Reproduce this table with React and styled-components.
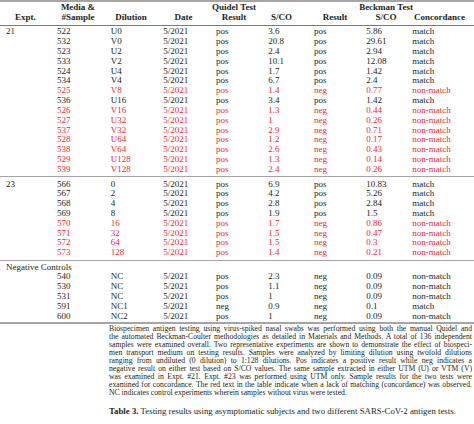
import React from 'react';
import styled, { createGlobalStyle, css } from 'styled-components';

const GlobalStyle = createGlobalStyle`
  html, body {
    margin: 0;
    padding: 0;
    background: #fff;
  }
  body {
    font-family: "Liberation Serif", "Times New Roman", serif;
    color: #231f20;
  }
`;

const COLS = '51px 54px 52px 53px 48px 47px 60px 42px 65px';
const PADS = [6, 6, 5.7, 6.3, 6, 10.3, 9, 1.3, 5.3];
const RED = '#ec2b31';

const padCells = PADS.map(
    (p, i) => css`
        & > *:nth-child(${i + 1}) {
            padding-left: ${p}px;
        }
    `
);

const Page = styled.div`
    width: 474px;
    height: 424px;
    overflow: hidden;
`;

const Table = styled.div`
    border-top: 2px solid #a5a5a5;
    border-bottom: 2px solid #a5a5a5;
`;

const Head = styled.div`
    display: grid;
    grid-template-columns: ${COLS};
    padding-bottom: 3px;
    border-bottom: 1px solid #7a7a7a;
    font-weight: bold;
    font-size: 9px;
    line-height: 10px;
`;

const HeadCell = styled.div`
    display: flex;
    flex-direction: column;
    justify-content: flex-end;
    align-items: center;
    height: 20px;
    white-space: nowrap;
`;

const Group = styled.div`
    padding: ${p => p.$top}px 0 ${p => p.$bottom}px;
    & + & {
        border-top: 1.5px solid #a5a5a5;
    }
`;

const Row = styled.div`
    display: grid;
    grid-template-columns: ${COLS};
    height: 9.84px;
    line-height: 9.84px;
    font-size: 9px;
    white-space: nowrap;
    color: ${p => (p.$red ? RED : '#231f20')};
    ${padCells}
`;

const GroupLabel = styled.div`
    height: 9.84px;
    line-height: 9.84px;
    font-size: 9px;
    padding-left: 6px;
`;

const Caption = styled.div`
    margin: 1px 2px 0 109px;
    font-size: 7.7px;
    line-height: 8px;
`;

const Line = styled.div`
    text-align: justify;
    text-align-last: ${p => (p.$last ? 'left' : 'justify')};
    word-spacing: ${p => p.$squeeze || 0}px;
`;

const Title = styled.div`
    margin-top: 9px;
    font-size: 8.8px;
    line-height: 10px;
    white-space: nowrap;
    b {
        font-weight: bold;
    }
`;

const headers = [
    ['', 'Expt.'],
    ['Media &', '#Sample'],
    ['', 'Dilution'],
    ['', 'Date'],
    ['Quidel Test', 'Result'],
    ['', 'S/CO'],
    ['', 'Result'],
    ['Beckman Test', 'S/CO'],
    ['', 'Concordance'],
];

// sample, dilution, quidel result, quidel s/co, beckman result, beckman s/co, concordance, red
const expt21 = [
    ['522', 'U0', 'pos', '3.6', 'pos', '5.86', 'match'],
    ['532', 'V0', 'pos', '20.8', 'pos', '29.61', 'match'],
    ['523', 'U2', 'pos', '2.4', 'pos', '2.94', 'match'],
    ['533', 'V2', 'pos', '10.1', 'pos', '12.08', 'match'],
    ['524', 'U4', 'pos', '1.7', 'pos', '1.42', 'match'],
    ['534', 'V4', 'pos', '6.7', 'pos', '2.4', 'match'],
    ['525', 'V8', 'pos', '1.4', 'neg', '0.77', 'non-match', true],
    ['536', 'U16', 'pos', '3.4', 'pos', '1.42', 'match'],
    ['526', 'V16', 'pos', '1.3', 'neg', '0.44', 'non-match', true],
    ['527', 'U32', 'pos', '1', 'neg', '0.26', 'non-match', true],
    ['537', 'V32', 'pos', '2.9', 'neg', '0.71', 'non-match', true],
    ['528', 'U64', 'pos', '1.2', 'neg', '0.17', 'non-match', true],
    ['538', 'V64', 'pos', '2.6', 'neg', '0.43', 'non-match', true],
    ['529', 'U128', 'pos', '1.3', 'neg', '0.14', 'non-match', true],
    ['539', 'V128', 'pos', '2.4', 'neg', '0.26', 'non-match', true],
];

const expt23 = [
    ['566', '0', 'pos', '6.9', 'pos', '10.83', 'match'],
    ['567', '2', 'pos', '4.2', 'pos', '5.26', 'match'],
    ['568', '4', 'pos', '2.8', 'pos', '2.84', 'match'],
    ['569', '8', 'pos', '1.9', 'pos', '1.5', 'match'],
    ['570', '16', 'pos', '1.7', 'neg', '0.86', 'non-match', true],
    ['571', '32', 'pos', '1.5', 'neg', '0.47', 'non-match', true],
    ['572', '64', 'pos', '1.5', 'neg', '0.3', 'non-match', true],
    ['573', '128', 'pos', '1.4', 'neg', '0.21', 'non-match', true],
];

const controls = [
    ['540', 'NC', 'pos', '2.3', 'neg', '0.09', 'non-match'],
    ['530', 'NC', 'pos', '1.1', 'neg', '0.09', 'non-match'],
    ['531', 'NC', 'pos', '1', 'neg', '0.09', 'non-match'],
    ['591', 'NC1', 'neg', '0.9', 'neg', '0.1', 'match'],
    ['600', 'NC2', 'pos', '1', 'neg', '0.09', 'non-match'],
];

const captionLines = [
    ['Biospecimen antigen testing using virus-spiked nasal swabs was performed using both the manual Quidel and'],
    ['the automated Beckman-Coulter methodologies as detailed in Materials and Methods. A total of 136 independent', -0.6],
    ['samples were examined overall. Two representative experiments are shown to demonstrate the effect of biospeci-', -0.8],
    ['men transport medium on testing results. Samples were analyzed by limiting dilution using twofold dilutions'],
    ['ranging from undiluted (0 dilution) to 1:128 dilutions. Pos indicates a positive result while neg indicates a'],
    ['negative result on either test based on S/CO values. The same sample extracted in either UTM (U) or VTM (V)', -0.4],
    ['was examined in Expt. #21. Expt. #23 was performed using UTM only. Sample results for the two tests were'],
    ['examined for concordance. The red text in the table indicate when a lack of matching (concordance) was observed.', -1],
    ['NC indicates control experiments wherein samples without virus were tested.'],
];

const DataRow = ({ expt, row }) => {
    const [sample, dilution, qRes, qSco, bRes, bSco, conc, red] = row;
    return (
        <Row $red={red}>
            <span>{expt}</span>
            <span>{sample}</span>
            <span>{dilution}</span>
            <span>5/2021</span>
            <span>{qRes}</span>
            <span>{qSco}</span>
            <span>{bRes}</span>
            <span>{bSco}</span>
            <span>{conc}</span>
        </Row>
    );
};

const App = () => {
    return (
        <Page>
            <GlobalStyle />
            <Table>
                <Head>
                    {headers.map(([top, bottom], i) => (
                        <HeadCell key={i}>
                            {top && <span>{top}</span>}
                            <span>{bottom}</span>
                        </HeadCell>
                    ))}
                </Head>
                <Group $top={1.3} $bottom={1.2}>
                    {expt21.map((row, i) => (
                        <DataRow key={row[0]} expt={i === 0 ? '21' : ''} row={row} />
                    ))}
                </Group>
                <Group $top={2.6} $bottom={1.5}>
                    {expt23.map((row, i) => (
                        <DataRow key={row[0]} expt={i === 0 ? '23' : ''} row={row} />
                    ))}
                </Group>
                <Group $top={2} $bottom={0}>
                    <GroupLabel>Negative Controls</GroupLabel>
                    {controls.map(row => (
                        <DataRow key={row[0]} expt="" row={row} />
                    ))}
                </Group>
            </Table>
            <Caption>
                {captionLines.map(([text, squeeze], i) => (
                    <Line key={i} $last={i === captionLines.length - 1} $squeeze={squeeze}>
                        {text}
                    </Line>
                ))}
                <Title>
                    <b>Table 3.</b> Testing results using asymptomatic subjects and two different SARS-CoV-2 antigen tests.
                </Title>
            </Caption>
        </Page>
    );
};

export default App;
